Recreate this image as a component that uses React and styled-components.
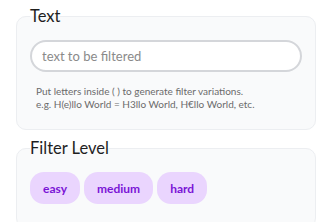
import styled, { createGlobalStyle } from "styled-components";

const GlobalStyle = createGlobalStyle`
  body {
    margin: 0;
    background: #ffffff;
    font-family: "Lato", "Open Sans", sans-serif;
  }
`;

const Page = styled.div`
  display: flex;
  flex-direction: column;
  gap: 8px;
  padding: 6px 17px 0 16px;
`;

const Section = styled.fieldset`
  margin: 0;
  padding: ${(p) => p.padTop || 14}px 13px 18px 13px;
  border: 1px solid #eceef1;
  border-radius: 10px;
  background: #f9fafb;
  min-height: ${(p) => p.minHeight || "auto"};
  box-sizing: border-box;
`;

const Legend = styled.legend`
  padding: 0;
  font-size: 16.5px;
  line-height: 20px;
  color: #1f1f1f;
`;

const TextInput = styled.input`
  box-sizing: border-box;
  width: 100%;
  height: 32px;
  border: 2px solid #d4d6da;
  border-radius: 16px;
  background: #ffffff;
  padding: 0 10px;
  font-family: inherit;
  font-size: 13px;
  color: #333;
  outline: none;

  &::placeholder {
    color: #8a8a8a;
  }
`;

const Hint = styled.p`
  margin: 13px 0 0 6px;
  font-size: 10px;
  line-height: 13px;
  color: #6b6b6b;
`;

const LevelRow = styled.div`
  display: flex;
  gap: 4px;
`;

const LevelButton = styled.button`
  height: 32px;
  padding: 0 13px;
  border: none;
  border-radius: 14px;
  background: #ead5fe;
  color: #7a14d6;
  font-family: inherit;
  font-weight: 700;
  font-size: 12px;
  cursor: pointer;
`;

const levels = ["easy", "medium", "hard"];

export default function App() {
  return (
    <>
      <GlobalStyle />
      <Page>
        <Section>
          <Legend>Text</Legend>
          <TextInput placeholder="text to be filtered" />
          <Hint>
            Put letters inside ( ) to generate filter variations.
            <br />
            e.g. H(e)llo World = H3llo World, H€llo World, etc.
          </Hint>
        </Section>
        <Section padTop={14} minHeight="90px">
          <Legend>Filter Level</Legend>
          <LevelRow>
            {levels.map((l) => (
              <LevelButton key={l}>{l}</LevelButton>
            ))}
          </LevelRow>
        </Section>
      </Page>
    </>
  );
}
